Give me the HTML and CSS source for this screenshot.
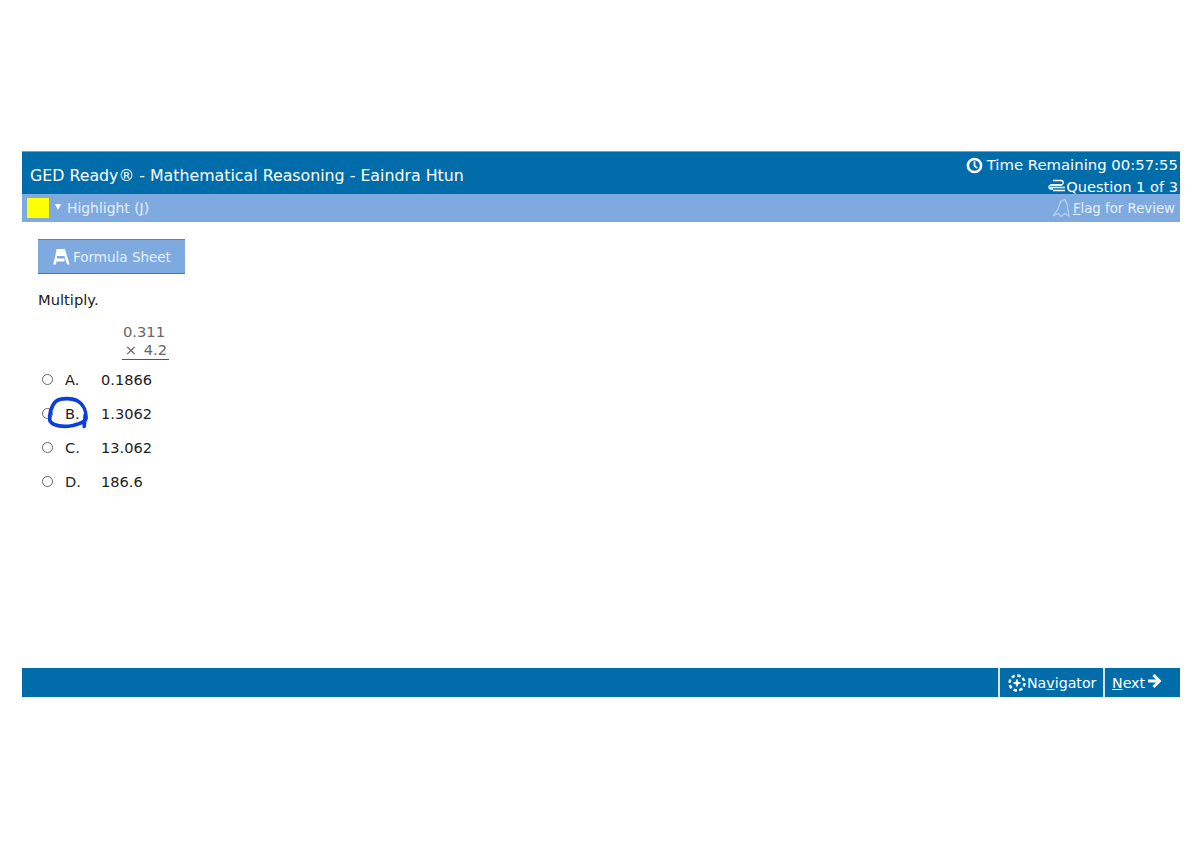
FILE: index.html
```html
<!DOCTYPE html>
<html lang="en">
<head>
<meta charset="utf-8">
<title>GED Ready</title>
<link rel="stylesheet" href="styles.css">
</head>
<body>
<div class="app">
  <header class="titlebar">
    <div class="title">GED Ready® - Mathematical Reasoning - Eaindra Htun</div>
    <div class="status">
      <div class="status-row">
        <svg class="ico-clock" viewBox="0 0 16 16"><circle cx="8" cy="8" r="6.2" fill="none" stroke="#fff" stroke-width="2.4"/><path d="M8 4v4.4l2.6 2" fill="none" stroke="#fff" stroke-width="1.6"/></svg>
        <span>Time Remaining 00:57:55</span>
      </div>
      <div class="status-row">
        <svg class="ico-list" viewBox="0 0 18 13"><path d="M5 1.500h8a2.200 2.200 0 0 1 0 4.500H3a2 2 0 0 0 0 4h2" fill="none" stroke="#fff" stroke-width="1.300"/><path d="M3 6h11M1 8.500h16M5 11.500h12" fill="none" stroke="#fff" stroke-width="1.400"/></svg>
        <span class="question">Question 1 of 3</span>
      </div>
    </div>
  </header>
  <div class="toolbar">
    <div class="tools-left">
      <span class="swatch"></span>
      <span class="caret"></span>
      <span>Highlight (<u>J</u>)</span>
    </div>
    <div class="tools-right">
      <svg class="ico-flag" viewBox="0 0 18 20"><path d="M1 18 6 11 8.500 3.500 13 1.500 15 6 17 18 13 15.500 9 18.500 6 15.500Z" fill="none" stroke="#bcd2ee" stroke-width="1.200"/></svg>
      <span><u>F</u>lag for Review</span>
    </div>
  </div>
  <main class="content">
    <button class="formula" type="button">
      <svg class="ico-sheet" viewBox="0 0 18 18"><path d="M4.500 1h8.500L17.500 16.500h-2.500L12.500 8H5L4 16.500H1L3 9.500Z" fill="#fff"/><rect x="3" y="10.500" width="9.500" height="3" fill="#fff"/></svg>
      <span>Formula Sheet</span>
    </button>
    <p class="prompt">Multiply.</p>
    <div class="sum">
      <div class="sum-top">0.311</div>
      <div class="sum-bottom">× 4.2</div>
    </div>
    <ul class="answers">
      <li class="answer"><span class="radio"></span><span class="letter">A.</span><span>0.1866</span></li>
      <li class="answer picked"><span class="radio"></span><span class="letter">B.</span><span>1.3062</span>
        <svg class="scribble" viewBox="0 0 44 34"><path d="M9 5C4 10 2 20 3 25 6 31 18 32 27 30 35 28 41 26 41 22 41 15 38 8 33 5 27 1 14 1 9 5ZM40 19 39 31" fill="none" stroke="#0a3fdc" stroke-width="3.800" stroke-linecap="round"/></svg>
      </li>
      <li class="answer"><span class="radio"></span><span class="letter">C.</span><span>13.062</span></li>
      <li class="answer"><span class="radio"></span><span class="letter">D.</span><span>186.6</span></li>
    </ul>
  </main>
  <footer class="footer">
    <div class="foot-btn nav">
      <svg class="ico-nav" viewBox="0 0 18 18"><circle cx="9" cy="9" r="7.500" fill="none" stroke="#fff" stroke-width="2.400" stroke-dasharray="3.500 2.400"/><path d="M9 4.500l1.300 3.200 3.200 1.300-3.200 1.300L9 13.500l-1.300-3.200L4.500 9l3.200-1.300Z" fill="#fff"/></svg>
      <span>Na<u>v</u>igator</span>
    </div>
    <div class="foot-btn next">
      <span><u>N</u>ext</span>
      <svg class="ico-arrow" viewBox="0 0 14 16"><path d="M1 8h10M6.500 2l6 6-6 6" fill="none" stroke="#fff" stroke-width="3"/></svg>
    </div>
  </footer>
</div>
</body>
</html>
```
FILE: styles.css
```css
* { box-sizing: border-box; }
html, body { margin: 0; background: #fff; }
body {
  height: 848px;
  padding: 151px 20px 0 22px;
  font-family: "DejaVu Sans", Verdana, sans-serif;
  color: #222;
  overflow: hidden;
}
.app { width: 1158px; }
.titlebar {
  height: 43px;
  background: #006daa;
  color: #fff;
  display: flex;
  justify-content: space-between;
  padding: 3px 2px 0 8px;
  border-top: 1px solid #8a9aa8;
}
.title { font-size: 15.800px; margin-top: 11px; line-height: 20px; }
.status { display: flex; flex-direction: column; align-items: flex-end; font-size: 14.850px; line-height: 21px; }
.status-row { display: flex; align-items: center; }
.question { font-size: 14.600px; }
.ico-clock { width: 17px; height: 17px; margin-right: 4px; }
.ico-list { width: 18px; height: 13px; margin-top: -3px; }
.toolbar {
  height: 28px;
  background: #7eaae0;
  color: #e6eff9;
  font-size: 13.900px;
  display: flex;
  justify-content: space-between;
  align-items: center;
  padding: 0 5px 0 5px;
}
.tools-left, .tools-right { display: flex; align-items: center; }
.tools-right { font-size: 13.300px; }
.swatch { width: 22px; height: 20px; background: #ffff00; margin-right: 6px; }
.caret {
  width: 0; height: 0;
  border-left: 3.500px solid transparent;
  border-right: 3.500px solid transparent;
  border-top: 6px solid #fff;
  margin-right: 6px;
  margin-top: -3px;
}
.ico-flag { width: 18px; height: 20px; margin-right: 3px; }
.content { height: 446px; padding: 17px 0 0 16px; }
.formula {
  display: flex;
  align-items: center;
  width: 147px;
  height: 35px;
  padding: 0 0 0 14px;
  background: #7eaae0;
  border: 0;
  border-top: 1px solid #4d86c4;
  border-bottom: 1px solid #3e7cbb;
  color: #e6eff9;
  font: 13.500px "DejaVu Sans", Verdana, sans-serif;
}
.ico-sheet { width: 18px; height: 18px; margin-right: 3px; }
.prompt { margin: 17px 0 0; font-size: 14.700px; line-height: 18px; }
.sum { margin: 14px 0 0 84px; width: 47px; color: #666; font-size: 14.700px; line-height: 18px; text-align: right; padding-right: 2px; }
.sum-top { padding-right: 1px; text-align: center; width: 45px; }
.sum-bottom { border-bottom: 1px solid #555; margin-right: -2px; padding-right: 2px; height: 19px; word-spacing: 2px; }
.answers { list-style: none; margin: 2px 0 0; padding: 0; }
.answer { position: relative; display: flex; align-items: center; height: 34px; font-size: 14.600px; }
.radio { width: 11px; height: 11px; border: 1px solid #666; border-radius: 50%; margin: 0 0 0 4px; background: #fff; }
.letter { width: 36px; margin-left: 12px; }
.scribble { position: absolute; left: 9px; top: 0; width: 42px; height: 34px; }
.footer {
  height: 29px;
  background: #006daa;
  display: flex;
  justify-content: flex-end;
  color: #fff;
  font-size: 14.200px;
}
.foot-btn { display: flex; align-items: center; border-left: 2px solid #d6e4ee; }
.nav { width: 105px; padding-left: 8px; }
.next { width: 77px; padding-left: 7px; }
.ico-nav { width: 18px; height: 18px; margin-right: 1px; }
.ico-arrow { width: 14px; height: 18px; margin: -3px 0 0 2px; }
```
